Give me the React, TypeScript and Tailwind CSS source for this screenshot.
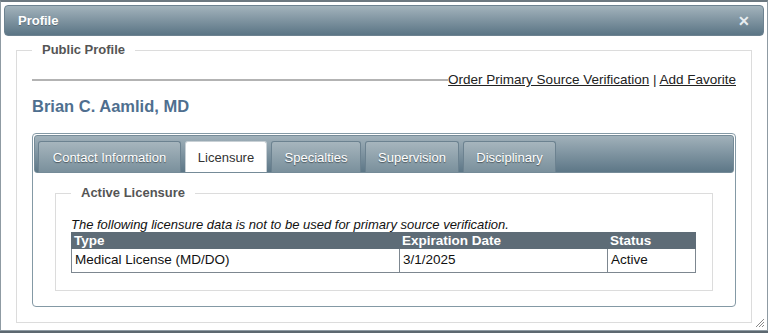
import React, { useState } from 'react';

const tabs = [
  { label: 'Contact Information', w: 'w-[143px]' },
  { label: 'Licensure', w: 'w-[82px]' },
  { label: 'Specialties', w: 'w-[90px]' },
  { label: 'Supervision', w: 'w-[94px]' },
  { label: 'Disciplinary', w: 'w-[93px]' },
];

export default function App() {
  const [activeTab, setActiveTab] = useState('Licensure');

  return (
    <div className="w-[768px] h-[333px] bg-[#5d6870] overflow-hidden font-['Liberation_Sans',Arial,sans-serif]">
      <div className="h-[331px] bg-white border border-[#8f9ba3] border-t-[2px] border-t-[#6c7880] p-[3px] flex flex-col relative">

        {/* TITLE BAR */}
        <div className="h-[31px] shrink-0 rounded-[4px] border border-[#6d8290] bg-gradient-to-b from-[#a3b3bc] to-[#5b7585] flex items-center justify-between pl-[13px] pr-[13px]">
          <span className="text-white font-bold text-[13px] [text-shadow:0_1px_0_rgba(0,0,0,0.25)]">Profile</span>
          <span className="text-[#e8edf0] font-bold text-[14px] leading-none">✕</span>
        </div>

        {/* PUBLIC PROFILE */}
        <fieldset className="mt-[6px] mx-[12px] mb-[6px] flex-1 border border-[#dcdcdc] px-[15px] pb-[15px]">
          <legend className="px-[10px] text-[13px] leading-[16px] font-bold text-[#555]">Public Profile</legend>

          <div className="mt-[14px] flex items-center h-[16px]">
            <div className="flex-1 border-t-[2px] border-[#b3b3b3]" />
            <div className="text-[13.5px] leading-[16px] text-[#222]">
              <span className="underline">Order Primary Source Verification</span>
              <span> | </span>
              <span className="underline">Add Favorite</span>
            </div>
          </div>

          <h2 className="mt-[9px] text-[16.5px] leading-[19px] font-bold text-[#4f6f8f]">Brian C. Aamlid, MD</h2>

          {/* TABS */}
          <div className="mt-[17px] border border-[#8499a5] rounded-[4px] p-[1px]">
            <div className="h-[38px] rounded-[3px] bg-gradient-to-b from-[#a1b1ba] to-[#5d7787] border border-[#758b98] flex items-end gap-[4px] pl-[3px]">
              {tabs.map((t) => (
                <button
                  key={t.label}
                  onClick={() => setActiveTab(t.label)}
                  className={`${t.w} h-[31px] rounded-t-[3px] text-[13px] leading-none border border-b-0 ${
                    activeTab === t.label
                      ? 'bg-white text-[#333] border-[#c8d0d5]'
                      : 'bg-gradient-to-b from-[#a6b5bd] to-[#7a909c] text-white border-[#6c8290] [text-shadow:0_1px_1px_rgba(0,0,0,0.45)]'
                  }`}
                >
                  {t.label}
                </button>
              ))}
            </div>

            <div className="px-[21px] pt-[12px] pb-[14px]">
              <fieldset className="border border-[#dcdcdc] pl-[15px] pr-[16px] pb-[17px]">
                <legend className="px-[10px] text-[13px] leading-[16px] font-bold text-[#555]">Active Licensure</legend>
                <p className="mt-[16px] italic text-[13px] leading-[15px] text-[#111]">
                  The following licensure data is not to be used for primary source verification.
                </p>
                <table className="w-full border-collapse text-[13.5px] text-[#111]">
                  <thead>
                    <tr className="bg-[#5e6c77] text-white font-bold text-left">
                      <th className="w-[328px] h-[16px] leading-[15px] px-[2px] py-0 border border-[#5e6c77]">Type</th>
                      <th className="w-[208px] h-[16px] leading-[15px] px-[2px] py-0 border border-[#5e6c77]">Expiration Date</th>
                      <th className="h-[16px] leading-[15px] px-[2px] py-0 border border-[#5e6c77]">Status</th>
                    </tr>
                  </thead>
                  <tbody>
                    <tr>
                      <td className="h-[24px] px-[3px] border border-[#7d8790]">Medical License (MD/DO)</td>
                      <td className="h-[24px] px-[3px] border border-[#7d8790]">3/1/2025</td>
                      <td className="h-[24px] px-[3px] border border-[#7d8790]">Active</td>
                    </tr>
                  </tbody>
                </table>
              </fieldset>
            </div>
          </div>
        </fieldset>

        {/* RESIZE GRIP */}
        <svg className="absolute right-[2px] bottom-[2px]" width="11" height="11" viewBox="0 0 11 11">
          <path d="M10 2 L2 10 M10 5 L5 10 M10 8 L8 10" stroke="#8a8a8a" strokeWidth="1" />
        </svg>
      </div>
    </div>
  );
}
